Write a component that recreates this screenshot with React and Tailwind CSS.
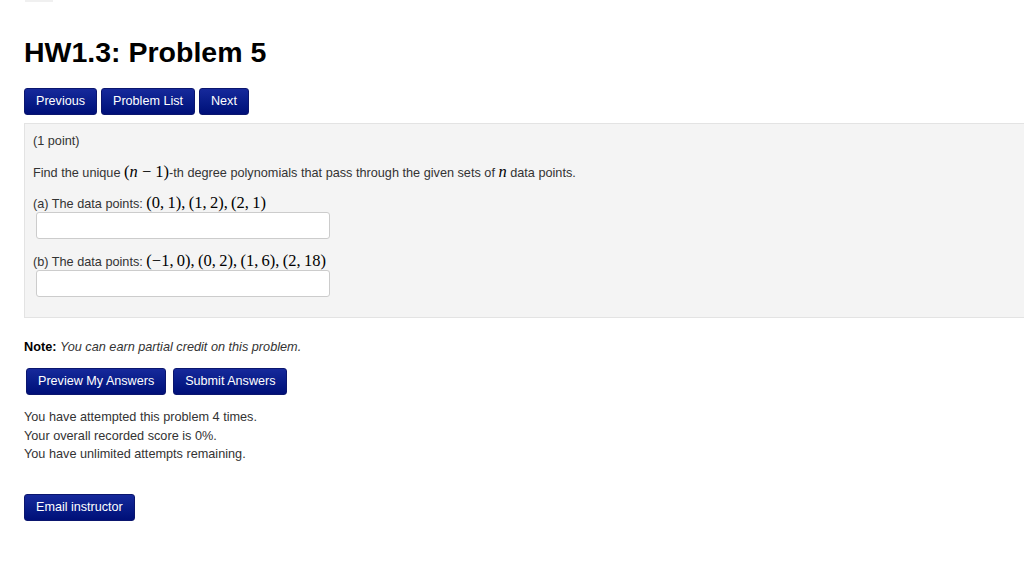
import React from "react";

// navy webwork-style button
const Btn = ({ children, className = "" }) => (
  <button
    className={
      "h-[27px] px-[11px] rounded-[3px] border border-[#0b166e] bg-gradient-to-b from-[#16299b] to-[#000f78] text-white text-[12.6px] leading-none " +
      className
    }
  >
    {children}
  </button>
);

const M = ({ children }) => (
  <span className="font-['Liberation_Serif',serif] text-[16.5px] text-black">{children}</span>
);

const Field = () => (
  <input
    type="text"
    className="ml-[3px] block w-[294px] h-[27px] rounded-[3px] border border-[#cccccc] bg-white"
  />
);

export default function App() {
  return (
    <div className="min-h-screen bg-white font-['Liberation_Sans',Arial,sans-serif] text-[12.7px] text-[#333]">
      {/* hidden nav remnant */}
      <div className="ml-[25px] w-[28px] h-[2px] bg-[#f0f0f0]" />

      <div className="pl-[24px] pt-[34px]">
        <h1 className="text-[28.5px] font-bold leading-[32px] text-black">HW1.3: Problem 5</h1>

        <div className="mt-[20px] flex gap-[4px]">
          <Btn>Previous</Btn>
          <Btn>Problem List</Btn>
          <Btn>Next</Btn>
        </div>

        <div className="mt-[8px] border border-r-0 border-[#e3e3e3] bg-[#f4f4f4] pt-[8px] pb-[20px] px-[8px]">
          <p className="h-[18px] leading-[18px]">(1 point)</p>
          <p className="mt-[12px] h-[20px] leading-[20px]">
            Find the unique <M>(<i>n</i> − 1)</M>-th degree polynomials that pass through the given sets of{" "}
            <M><i>n</i></M> data points.
          </p>
          <p className="mt-[11px] h-[19px] leading-[19px]">
            (a) The data points: <M>(0,{"\u2009"}1),{"\u2009"}(1,{"\u2009"}2),{"\u2009"}(2,{"\u2009"}1)</M>
          </p>
          <Field />
          <p className="mt-[12px] h-[19px] leading-[19px]">
            (b) The data points:{" "}
            <M>
              (−1,{"\u2009"}0),{"\u2009"}(0,{"\u2009"}2),{"\u2009"}(1,{"\u2009"}6),{"\u2009"}(2,{"\u2009"}18)
            </M>
          </p>
          <Field />
        </div>

        <p className="mt-[20px] h-[18px] leading-[18px]">
          <b className="text-black">Note:</b> <i>You can earn partial credit on this problem.</i>
        </p>

        <div className="mt-[12px] ml-[2px] flex gap-[7px]">
          <Btn>Preview My Answers</Btn>
          <Btn>Submit Answers</Btn>
        </div>

        <div className="mt-[13px] leading-[18.5px]">
          <p>You have attempted this problem 4 times.</p>
          <p>Your overall recorded score is 0%.</p>
          <p>You have unlimited attempts remaining.</p>
        </div>

        <div className="mt-[30px]">
          <Btn>Email instructor</Btn>
        </div>
      </div>
    </div>
  );
}
